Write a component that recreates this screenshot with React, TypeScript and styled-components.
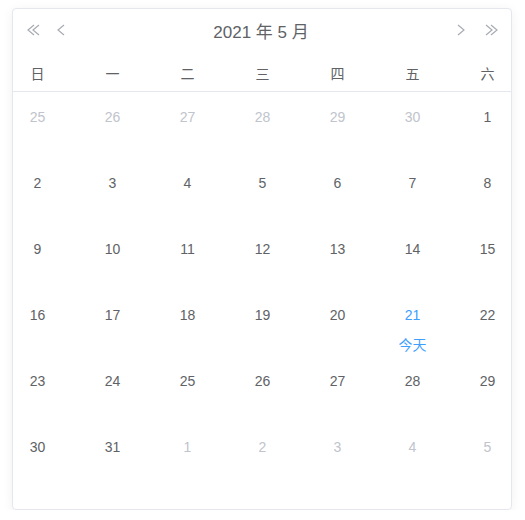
import React from "react";
import styled, { createGlobalStyle } from "styled-components";

const Global = createGlobalStyle`
  html, body { margin: 0; padding: 0; background: #ffffff; }
  body { font-family: "Liberation Sans", Arial, "Noto Sans CJK SC", sans-serif; }
`;

const Page = styled.div`
  padding: 8px 0 0 12px;
`;

const Card = styled.div`
  box-sizing: border-box;
  width: 500px;
  height: 502px;
  border: 1px solid #e4e7ed;
  border-radius: 4px;
  background: #fff;
  box-shadow: 0 2px 12px 0 rgba(0, 0, 0, 0.06);
`;

const Header = styled.div`
  height: 42px;
  display: flex;
  align-items: center;
  justify-content: space-between;
  padding: 0 13px 0 14px;
`;

const NavGroup = styled.div<{ $gap: number }>`
  display: flex;
  align-items: center;
  gap: ${(p) => p.$gap}px;
`;

const NavButton = styled.span`
  display: inline-flex;
  align-items: center;
  justify-content: center;
  color: #a8abb2;
  cursor: pointer;
`;

const Title = styled.div`
  font-size: 17px;
  color: #606266;
  font-family: "Liberation Sans", Arial, "Noto Sans CJK SC", sans-serif;
`;

const Grid = styled.div`
  margin: 0 -13px;
  display: grid;
  grid-template-columns: repeat(7, 75px);
`;

const WeekRow = styled.div`
  margin-top: 8px;
  height: 32px;
  border-bottom: 1px solid #e4e7ed;
`;

const WeekDay = styled.div`
  text-align: center;
  font-size: 14px;
  color: #606266;
  line-height: 32px;
  font-family: "Noto Sans CJK SC", sans-serif;
  margin-top: -2px;
`;

const Cell = styled.div`
  height: 66px;
  box-sizing: border-box;
  padding-top: 16px;
  display: flex;
  flex-direction: column;
  align-items: center;
`;

const DayNum = styled.span<{ $tone: "prev" | "cur" | "today" }>`
  font-size: 14px;
  line-height: 18px;
  color: ${(p) => (p.$tone === "prev" ? "#c0c4cc" : p.$tone === "today" ? "#409eff" : "#606266")};
`;

const TodayLabel = styled.span`
  margin-top: 10px;
  font-size: 14px;
  line-height: 20px;
  color: #409eff;
  font-family: "Noto Sans CJK SC", sans-serif;
`;

const Chevron = ({ dir, double }: { dir: "l" | "r"; double?: boolean }) => {
  const single = (ox: number) =>
    dir === "l"
      ? `M${ox + 6} 1 L${ox} 6 L${ox + 6} 11`
      : `M${ox} 1 L${ox + 6} 6 L${ox} 11`;
  return (
    <svg width={double ? 13 : 8} height="12" viewBox={`0 0 ${double ? 13 : 8} 12`} fill="none">
      <path d={single(1)} stroke="currentColor" strokeWidth="1.2" />
      {double && <path d={single(6)} stroke="currentColor" strokeWidth="1.2" />}
    </svg>
  );
};

type Day = { n: number; tone: "prev" | "cur" | "today" };

const buildDays = (): Day[] => {
  const days: Day[] = [];
  for (let d = 25; d <= 30; d++) days.push({ n: d, tone: "prev" });
  for (let d = 1; d <= 31; d++) days.push({ n: d, tone: d === 21 ? "today" : "cur" });
  for (let d = 1; d <= 5; d++) days.push({ n: d, tone: "prev" });
  return days;
};

const weekdays = ["日", "一", "二", "三", "四", "五", "六"];

export default function App() {
  const days = buildDays();
  return (
    <>
      <Global />
      <Page>
        <Card>
          <Header>
            <NavGroup $gap={17}>
              <NavButton><Chevron dir="l" double /></NavButton>
              <NavButton><Chevron dir="l" /></NavButton>
            </NavGroup>
            <Title>2021 年 5 月</Title>
            <NavGroup $gap={20}>
              <NavButton><Chevron dir="r" /></NavButton>
              <NavButton><Chevron dir="r" double /></NavButton>
            </NavGroup>
          </Header>
          <WeekRow>
            <Grid>
              {weekdays.map((w) => (
                <WeekDay key={w}>{w}</WeekDay>
              ))}
            </Grid>
          </WeekRow>
          <Grid>
            {days.map((d, i) => (
              <Cell key={i}>
                <DayNum $tone={d.tone}>{d.n}</DayNum>
                {d.tone === "today" && <TodayLabel>今天</TodayLabel>}
              </Cell>
            ))}
          </Grid>
        </Card>
      </Page>
    </>
  );
}
